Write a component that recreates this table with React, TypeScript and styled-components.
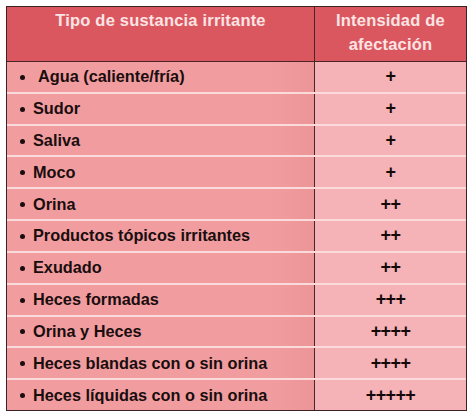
import React from "react";
import styled, { createGlobalStyle } from "styled-components";

const Global = createGlobalStyle`
  html, body { margin: 0; padding: 0; background: #ffffff; }
  body { font-family: "Liberation Sans", Arial, sans-serif; }
`;

const Page = styled.div`
  padding: 6px 0 0 6px;
  width: 474px;
  height: 418px;
  box-sizing: border-box;
`;

const Table = styled.div`
  width: 461px;
  height: 405px;
  box-sizing: border-box;
  border: 1.5px solid #3b2224;
  display: flex;
  flex-direction: column;
  background: #f3a6a9;
`;

const HeaderRow = styled.div`
  display: grid;
  grid-template-columns: 308px 1fr;
  height: 54px;
  flex: none;
  border-bottom: 1.5px solid #4a2426;
  background: #db5760;
`;

const HeadCell = styled.div<{ $divider?: boolean }>`
  color: #fbe4e4;
  font-weight: bold;
  font-size: 16.5px;
  line-height: 24px;
  text-align: center;
  padding-top: 1px;
  letter-spacing: 0.2px;
  border-right: ${(p) => (p.$divider ? "1.5px solid #4a2426" : "none")};
`;

const Body = styled.div`
  flex: 1;
  display: flex;
  flex-direction: column;
`;

const Row = styled.div<{ $first?: boolean }>`
  flex: 1;
  display: grid;
  grid-template-columns: 308px 1fr;
  border-top: ${(p) => (p.$first ? "none" : "2px solid #fadadb")};
`;

const NameCell = styled.div`
  display: flex;
  align-items: center;
  padding-left: 13px;
  font-weight: bold;
  font-size: 16.3px;
  color: #1a0d0e;
  background: linear-gradient(to right, #f19da0 0%, #f19da0 85%, #ec9598 100%);
  border-right: 1.5px solid #4a2426;
`;

const Bullet = styled.span`
  display: inline-block;
  flex: none;
  width: 5px;
  height: 5px;
  border-radius: 50%;
  background: #1a0d0e;
  margin-right: 8px;
  margin-top: 1px;
`;

const Name = styled.span<{ $extra?: boolean }>`
  padding-left: ${(p) => (p.$extra ? "5px" : "0")};
  white-space: nowrap;
`;

const LevelCell = styled.div`
  display: flex;
  align-items: center;
  justify-content: center;
  background: #f5b3b7;
  font-weight: bold;
  font-size: 18px;
  letter-spacing: -0.6px;
  color: #140a0a;
`;

const rows: [string, string][] = [
  [" Agua (caliente/fría)", "+"],
  ["Sudor", "+"],
  ["Saliva", "+"],
  ["Moco", "+"],
  ["Orina", "++"],
  ["Productos tópicos irritantes", "++"],
  ["Exudado", "++"],
  ["Heces formadas", "+++"],
  ["Orina y Heces", "++++"],
  ["Heces blandas con o sin orina", "++++"],
  ["Heces líquidas con o sin orina", "+++++"],
];

export default function App() {
  return (
    <Page>
      <Global />
      <Table>
        <HeaderRow>
          <HeadCell $divider>Tipo de sustancia irritante</HeadCell>
          <HeadCell>
            Intensidad de
            <br />
            afectación
          </HeadCell>
        </HeaderRow>
        <Body>
          {rows.map(([name, level], i) => (
            <Row key={name} $first={i === 0}>
              <NameCell>
                <Bullet />
                <Name $extra={name.startsWith(" ")}>{name.trim()}</Name>
              </NameCell>
              <LevelCell>{level}</LevelCell>
            </Row>
          ))}
        </Body>
      </Table>
    </Page>
  );
}
